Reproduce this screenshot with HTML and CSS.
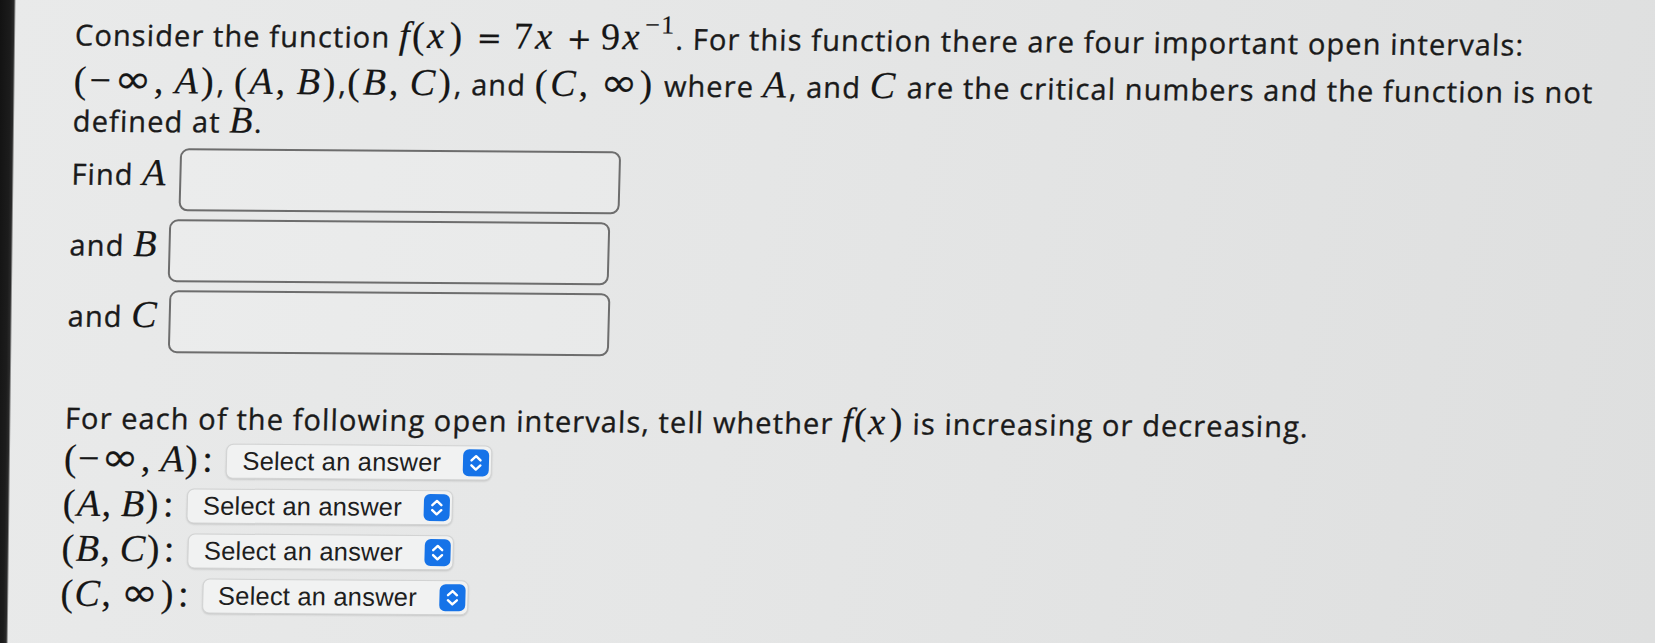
FILE: index.html
```html
<!DOCTYPE html>
<html lang="en">
<head>
<meta charset="utf-8">
<title>Increasing and decreasing intervals</title>
<link rel="stylesheet" href="styles.css">
</head>
<body>
<div class="frame">
  <main class="content">
    <div class="intro">
      <div class="line l1">Consider the function <span class="m"><i>f</i>(<i class="x">x</i>)<span class="rel">=</span>7<i class="x">x</i><span class="bin">+</span>9<i class="x">x</i><sup>−1</sup></span>. For this function there are four important open intervals:</div>
      <div class="line l2"><span class="m">(−<span class="inf">∞</span>,<span class="th"></span><i>A</i>)</span>, <span class="m">(<i>A</i>,<span class="th"></span><i>B</i>)</span>,<span class="m">(<i>B</i>,<span class="th"></span><i>C</i>)</span>, and <span class="m">(<i>C</i>,<span class="th"></span><span class="inf">∞</span>)</span> where <span class="m"><i>A</i></span>, and <span class="m"><i>C</i></span> are the critical numbers and the function is not</div>
      <div class="line l3">defined at <span class="m"><i>B</i></span>.</div>
    </div>

    <div class="answers">
      <div class="arow">
        <label class="alabel" for="ansA">Find <span class="m"><i>A</i></span></label>
        <input class="field field-a" id="ansA" type="text">
      </div>
      <div class="arow">
        <label class="alabel" for="ansB">and <span class="m"><i>B</i></span></label>
        <input class="field" id="ansB" type="text">
      </div>
      <div class="arow">
        <label class="alabel" for="ansC">and <span class="m"><i>C</i></span></label>
        <input class="field" id="ansC" type="text">
      </div>
    </div>

    <div class="line prompt">For each of the following open intervals, tell whether <span class="m"><i>f</i>(<i class="x">x</i>)</span> is increasing or decreasing.</div>

    <div class="srows">
      <div class="srow">
        <span class="slabel m">(−<span class="inf">∞</span>,<span class="th"></span><i>A</i>)<span class="colon">:</span></span>
        <div class="select"><span class="stext">Select an answer</span><span class="sbtn"><svg viewBox="0 0 26 27" width="26" height="27"><path d="M8.5 11 L13 6.8 L17.5 11 M8.5 16 L13 20.2 L17.5 16" fill="none" stroke="#fff" stroke-width="2.4" stroke-linecap="round" stroke-linejoin="round"/></svg></span></div>
      </div>
      <div class="srow">
        <span class="slabel m">(<i>A</i>,<span class="th"></span><i>B</i>)<span class="colon">:</span></span>
        <div class="select"><span class="stext">Select an answer</span><span class="sbtn"><svg viewBox="0 0 26 27" width="26" height="27"><path d="M8.5 11 L13 6.8 L17.5 11 M8.5 16 L13 20.2 L17.5 16" fill="none" stroke="#fff" stroke-width="2.4" stroke-linecap="round" stroke-linejoin="round"/></svg></span></div>
      </div>
      <div class="srow">
        <span class="slabel m">(<i>B</i>,<span class="th"></span><i>C</i>)<span class="colon">:</span></span>
        <div class="select"><span class="stext">Select an answer</span><span class="sbtn"><svg viewBox="0 0 26 27" width="26" height="27"><path d="M8.5 11 L13 6.8 L17.5 11 M8.5 16 L13 20.2 L17.5 16" fill="none" stroke="#fff" stroke-width="2.4" stroke-linecap="round" stroke-linejoin="round"/></svg></span></div>
      </div>
      <div class="srow">
        <span class="slabel m">(<i>C</i>,<span class="th"></span><span class="inf">∞</span>)<span class="colon">:</span></span>
        <div class="select"><span class="stext">Select an answer</span><span class="sbtn"><svg viewBox="0 0 26 27" width="26" height="27"><path d="M8.5 11 L13 6.8 L17.5 11 M8.5 16 L13 20.2 L17.5 16" fill="none" stroke="#fff" stroke-width="2.4" stroke-linecap="round" stroke-linejoin="round"/></svg></span></div>
      </div>
    </div>
  </main>
</div>
</body>
</html>
```

FILE: styles.css
```css
html, body {
  margin: 0;
  padding: 0;
}

body {
  width: 1655px;
  height: 643px;
  overflow: hidden;
  background: #e4e5e5;
  color: #1a1a1a;
  font-family: "Open Sans", "Liberation Sans", sans-serif;
  font-weight: 400;
}

/* screen background with the dark monitor bezel on the left edge */
.frame {
  height: 643px;
  background:
    linear-gradient(90.7deg, #121212 0, #1c1c1c 11px, #2a2a2a 14px, rgba(60, 60, 60, 0) 16px),
    linear-gradient(100deg, #e9eaea 0%, #e5e6e6 45%, #dedfdf 100%);
}

.content {
  padding: 14px 0 0 76px;
  font-size: 29px;
  letter-spacing: 1.1px;
  -webkit-text-stroke: 0.35px #1a1a1a;
  transform: skew(-1.5deg, 0.4deg);
  transform-origin: 0 0;
}

.line {
  line-height: 39px;
  white-space: nowrap;
}

.l2 {
  padding-top: 8px;
}

/* math */
.m {
  font-family: "Liberation Serif", "Times New Roman", serif;
  font-size: 38px;
  letter-spacing: 1.5px;
  line-height: 36px;
  color: #161616;
  -webkit-text-stroke: 0.2px #161616;
}

.l1 .m {
  letter-spacing: 2.5px;
}

.l2 .m {
  letter-spacing: 3px;
}

.m i {
  font-style: italic;
}

.m i.x {
  padding-right: 0.08em;
}

.m .rel,
.m .bin {
  font-family: "DejaVu Sans", sans-serif;
  font-size: 30px;
  letter-spacing: 0;
}

.m .rel {
  margin: 0 0.4em;
}

.m .bin {
  margin: 0 0.3em;
}

.m .inf {
  display: inline-block;
  width: 38px;
  margin-right: 2px;
  font-family: "DejaVu Sans", sans-serif;
  font-size: 40px;
  line-height: 30px;
  letter-spacing: 0;
  text-align: center;
  transform: scaleX(1.12);
}

.m .th {
  display: inline-block;
  width: 0.22em;
}

.m sup {
  font-size: 26px;
  line-height: 0;
  vertical-align: 16px;
  letter-spacing: 1.5px;
}

.m .colon {
  margin-left: 0.08em;
}

/* answer boxes */
.answers {
  margin-top: 8px;
}

.arow {
  display: flex;
  align-items: center;
  height: 63px;
  margin-bottom: 8px;
}

.alabel {
  line-height: 39px;
  padding-bottom: 13px;
  white-space: nowrap;
}

.field {
  box-sizing: border-box;
  width: 441px;
  height: 63px;
  margin: 0 0 0 11px;
  border: 2px solid #6d6d6d;
  border-radius: 9px;
  background: rgba(255, 255, 255, 0.14);
  outline: none;
  font: inherit;
}

.field-a {
  margin-left: 12px;
}

/* prompt & selects */
.prompt {
  margin-top: 45px;
}

.srows {
  margin-top: 1px;
}

.srow {
  display: flex;
  align-items: center;
  height: 45px;
}

.slabel {
  padding-bottom: 6px;
  white-space: nowrap;
}

.select {
  box-sizing: border-box;
  width: 266px;
  height: 35px;
  margin-left: 12px;
  padding: 0 2px 0 15px;
  display: flex;
  align-items: center;
  justify-content: space-between;
  background: #f1f2f2;
  border: 1px solid #d2d3d3;
  border-radius: 7px;
  box-shadow: 0 1px 2px rgba(0, 0, 0, 0.14);
  -webkit-text-stroke: 0;
}

.stext {
  font-family: "Liberation Sans", Arial, sans-serif;
  font-size: 25.5px;
  letter-spacing: 0.2px;
  color: #1e1e1e;
  white-space: nowrap;
}

.sbtn {
  flex: none;
  width: 26px;
  height: 27px;
  border-radius: 6px;
  background: #1673e8;
  display: flex;
  align-items: center;
  justify-content: center;
}

.sbtn svg {
  display: block;
}
```
